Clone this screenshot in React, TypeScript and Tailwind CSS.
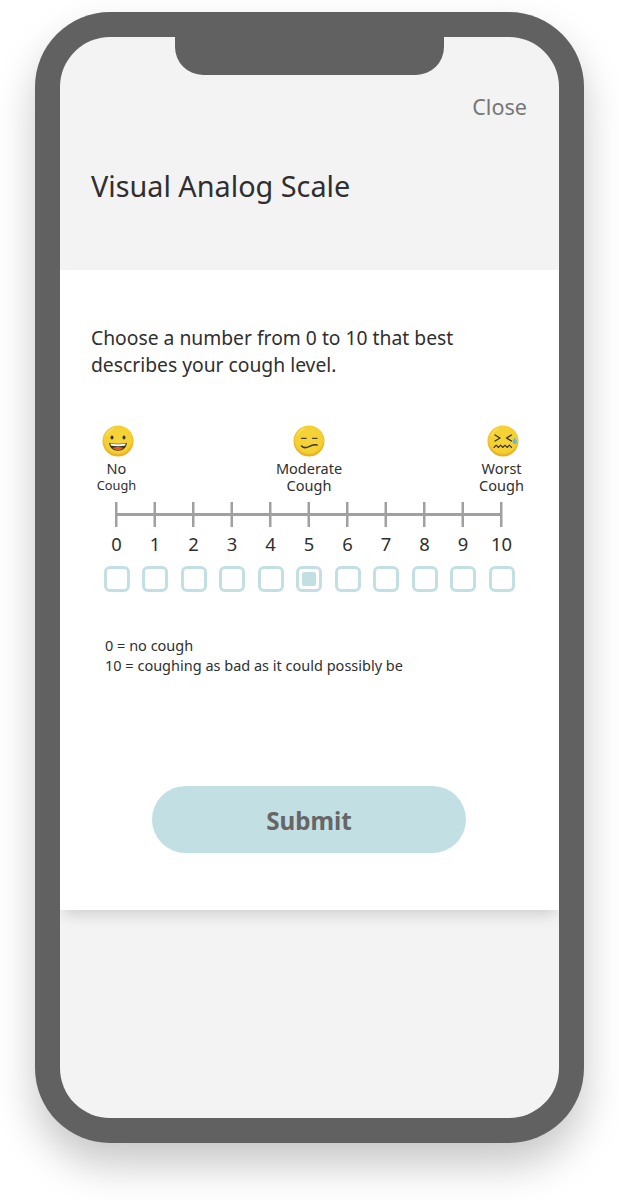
import React from "react";

const NUMBERS = [0, 1, 2, 3, 4, 5, 6, 7, 8, 9, 10];
const font = { fontFamily: '"Noto Sans", sans-serif' };

function FaceBase({ id, children }: { id: string; children: React.ReactNode }) {
  return (
    <svg width="34" height="34" viewBox="0 0 34 34" fill="none">
      <defs>
        <radialGradient id={id} cx="50%" cy="44%" r="52%">
          <stop offset="0%" stopColor="#f6d53a" />
          <stop offset="84%" stopColor="#f4d032" />
          <stop offset="100%" stopColor="#eab024" />
        </radialGradient>
      </defs>
      <circle cx="17" cy="17" r="15.5" fill={`url(#${id})`} />
      <path d="M5.5 11.5C6.8 8.2 9 6 12 4.8" stroke="#fbe88c" strokeWidth="0.9" strokeLinecap="round" />
      {children}
    </svg>
  );
}

function HappyFace() {
  return (
    <FaceBase id="happy">
      <ellipse cx="11" cy="13.5" rx="1.5" ry="1.9" fill="#3b3524" />
      <ellipse cx="23" cy="13.5" rx="1.5" ry="1.9" fill="#3b3524" />
      <path d="M8 18.7C13 20 21 20 26 18.7C25.5 23.5 22 26.7 17 26.7C12 26.7 8.5 23.5 8 18.7Z" fill="#3b3524" />
      <path d="M9.3 19.5C13.5 20.6 20.5 20.6 24.7 19.5L24.2 21.6C20 22.5 14 22.5 9.8 21.6Z" fill="#ffffff" />
      <path d="M11.8 23.9C14.5 22.7 19.5 22.7 22.2 23.9C20.9 25.3 19.1 26 17 26C14.9 26 13.1 25.3 11.8 23.9Z" fill="#e2592c" />
    </FaceBase>
  );
}

function NeutralFace() {
  return (
    <FaceBase id="neutral">
      <path d="M9.5 14.3H14.2M20.5 14.3H25" stroke="#4a4228" strokeWidth="1.3" strokeLinecap="round" />
      <path d="M9.5 22C12 24.4 15 23.6 17 22.6C19.5 21.2 22 20.4 25 21" stroke="#3b3524" strokeWidth="1.6" strokeLinecap="round" />
    </FaceBase>
  );
}

function WorstFace() {
  return (
    <FaceBase id="worst">
      <path d="M9 11L14 14L9 17M25.5 11L20.5 14L25.5 17" stroke="#3b3524" strokeWidth="1.4" strokeLinecap="round" strokeLinejoin="round" />
      <path d="M8 23.5L10.2 21.2L12.4 23.5L14.6 21.2L16.8 23.5L19 21.2L21.2 23.5L23.4 21.2L25.6 23.5" stroke="#3b3524" strokeWidth="1.1" strokeLinecap="round" strokeLinejoin="round" />
      <path d="M28.7 13.5C29.9 15.7 30.8 16.7 30.8 18C30.8 19.2 29.9 20.1 28.7 20.1C27.5 20.1 26.6 19.2 26.6 18C26.6 16.7 27.5 15.7 28.7 13.5Z" fill="#5fb8e0" />
    </FaceBase>
  );
}

function ScaleLine() {
  const pitch = 38.5;
  return (
    <svg width="423.5" height="25" viewBox="0 0 423.5 25" className="block">
      <line x1="19.25" x2="404.25" y1="12.5" y2="12.5" stroke="#a0a0a0" strokeWidth="3" />
      {NUMBERS.map((n) => (
        <line key={n} x1={19.25 + n * pitch} x2={19.25 + n * pitch} y1="0" y2="25" stroke="#a0a0a0" strokeWidth="2.5" />
      ))}
    </svg>
  );
}

export default function App() {
  return (
    <div className="w-[619px] h-[1200px] bg-white pt-[12px] pl-[35px] overflow-hidden text-[#2f2f2f]" style={font}>
      <div className="relative w-[549px] h-[1131px] rounded-[75px] bg-[#616161] p-[25px] shadow-[0_22px_40px_rgba(0,0,0,0.22)]">
        {/* Notch */}
        <div className="absolute top-[25px] left-[140px] w-[269px] h-[38px] rounded-b-[28px] bg-[#616161] z-10" />

        <div className="h-full rounded-[50px] bg-[#f3f3f3] overflow-hidden">
          <div className="h-[233px] pl-[31px] pr-[32px] flex flex-col">
            <div className="pt-[54px] text-right text-[21.6px] leading-[32px] text-[#777777]">Close</div>
            <h1 className="mt-[43px] text-[28.8px] leading-[40px] font-normal">Visual Analog Scale</h1>
          </div>

          <div className="h-[640px] bg-white shadow-[0_8px_14px_-4px_rgba(0,0,0,0.16)] flex flex-col">
            <p className="pt-[55px] px-[31px] text-[19.3px] leading-[26.5px] whitespace-nowrap">
              Choose a number from 0 to 10 that best
              <br />
              describes your cough level.
            </p>

            <div className="mt-[46px] ml-[37.25px] w-[423.5px]">
              <div className="grid grid-cols-11">
                <div className="col-start-1 flex flex-col items-center whitespace-nowrap">
                  <div className="ml-[2px]">
                    <HappyFace />
                  </div>
                  <span className="mt-[2px] text-[14.5px] leading-[17px]">No</span>
                  <span className="text-[12.8px] leading-[17px]">Cough</span>
                </div>
                <div className="col-start-6 flex flex-col items-center whitespace-nowrap">
                  <NeutralFace />
                  <span className="mt-[2px] text-[14.5px] leading-[17px]">Moderate</span>
                  <span className="text-[14.5px] leading-[17px]">Cough</span>
                </div>
                <div className="col-start-11 flex flex-col items-center whitespace-nowrap">
                  <div className="ml-[3px]">
                    <WorstFace />
                  </div>
                  <span className="mt-[2px] text-[14.5px] leading-[17px]">Worst</span>
                  <span className="text-[14.5px] leading-[17px]">Cough</span>
                </div>
              </div>

              <div className="mt-[8px]">
                <ScaleLine />
              </div>

              <div className="mt-[4px] grid grid-cols-11">
                {NUMBERS.map((n) => (
                  <div key={n} className="text-center text-[18.4px] leading-[26px]">
                    {n}
                  </div>
                ))}
              </div>

              <div className="mt-[9px] grid grid-cols-11">
                {NUMBERS.map((n) => (
                  <div key={n} className="flex justify-center">
                    <div className="w-[26px] h-[26px] rounded-[6px] border-[3px] border-[#c2e0e4] flex items-center justify-center">
                      {n === 5 && <div className="w-[14px] h-[14px] rounded-[2px] bg-[#c2e0e4]" />}
                    </div>
                  </div>
                ))}
              </div>
            </div>

            <div className="mt-[43px] ml-[45px] text-[14.5px] leading-[20px]">
              <div>0 = no cough</div>
              <div>10 = coughing as bad as it could possibly be</div>
            </div>

            <div className="mt-[111px] ml-[92px]">
              <button className="w-[314px] h-[67px] pt-[3px] rounded-[34px] bg-[#c2e0e4] text-[24.2px] font-bold text-[#666666]">
                Submit
              </button>
            </div>
          </div>
        </div>
      </div>
    </div>
  );
}
